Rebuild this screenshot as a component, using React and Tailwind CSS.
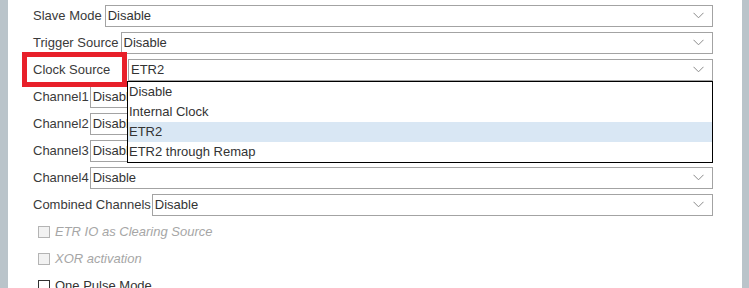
import React from "react";

const Chevron = () => (
  <svg width="11" height="7" viewBox="0 0 11 7" className="shrink-0">
    <path d="M0.5 0.8 L5.5 5.8 L10.5 0.8" fill="none" stroke="#8a8a8a" strokeWidth="1" />
  </svg>
);

const Select = ({ value }) => (
  <div className="relative flex-1 h-[22px] border border-[#a3a3a3] bg-white flex items-center pl-[2px] pr-[8px]">
    <span className="flex-1 truncate text-[#333]">{value}</span>
    <Chevron />
  </div>
);

const Row = ({ label, value, gap = "ml-[2px]" }) => (
  <div className="h-[27px] flex items-center">
    <span className="text-[#3a3a3a] whitespace-nowrap">{label}</span>
    <div className={`flex-1 flex ${gap}`}>
      <Select value={value} />
    </div>
  </div>
);

const Check = ({ label, disabled }) => (
  <div className="h-[27px] flex items-center pl-[5px]">
    <span
      className={
        disabled
          ? "w-[12px] h-[12px] border border-[#b4b4b4] bg-[#f2f2f2]"
          : "w-[12px] h-[12px] border border-[#333] bg-white"
      }
    />
    <span className={disabled ? "ml-[5px] italic text-[#a6a6a6]" : "ml-[5px] text-[#333]"}>{label}</span>
  </div>
);

export default function App() {
  return (
    <div
      className="w-[749px] h-[288px] overflow-hidden flex bg-white text-[13px] leading-none"
      style={{ fontFamily: '"Liberation Sans", Arial, sans-serif' }}
    >
      <div className="w-[8px] bg-[#bac4ca]" />
      <div className="flex-1 pl-[25px] pr-[29px] pt-[2px]">
        <Row label="Slave Mode" value="Disable" gap="ml-[3px]" />
        <Row label="Trigger Source" value="Disable" gap="ml-[2px]" />
        <div className="h-[27px] flex items-center relative z-10">
          <div className="-ml-[11px] w-[105px] h-[35px] border-[5px] border-[#e8202a] flex items-center pl-[6px] shrink-0">
            <span className="text-[#3a3a3a] whitespace-nowrap">Clock Source</span>
          </div>
          <div className="flex-1 flex ml-[1px]">
            <div className="relative flex-1 h-[22px] border border-[#a3a3a3] bg-white flex items-center pl-[2px] pr-[8px]">
              <span className="flex-1 text-[#333]">ETR2</span>
              <Chevron />
              <div className="absolute left-[-2px] right-[-1px] top-[21px] border border-black bg-white">
                <div className="h-[20px] flex items-center pl-[1px] text-[#333]">Disable</div>
                <div className="h-[20px] flex items-center pl-[1px] text-[#333]">Internal Clock</div>
                <div className="h-[20px] flex items-center pl-[1px] text-[#333] bg-[#d9e7f4]">ETR2</div>
                <div className="h-[20px] flex items-center pl-[1px] text-[#333]">ETR2 through Remap</div>
              </div>
            </div>
          </div>
        </div>
        <Row label="Channel1" value="Disable" gap="ml-[1px]" />
        <Row label="Channel2" value="Disable" gap="ml-[1px]" />
        <Row label="Channel3" value="Disable" gap="ml-[1px]" />
        <Row label="Channel4" value="Disable" gap="ml-[1px]" />
        <Row label="Combined Channels" value="Disable" gap="ml-[1px]" />
        <Check label="ETR IO as Clearing Source" disabled />
        <Check label="XOR activation" disabled />
        <Check label="One Pulse Mode" />
      </div>
      <div className="w-[7px] bg-[#bac4ca]" />
    </div>
  );
}
